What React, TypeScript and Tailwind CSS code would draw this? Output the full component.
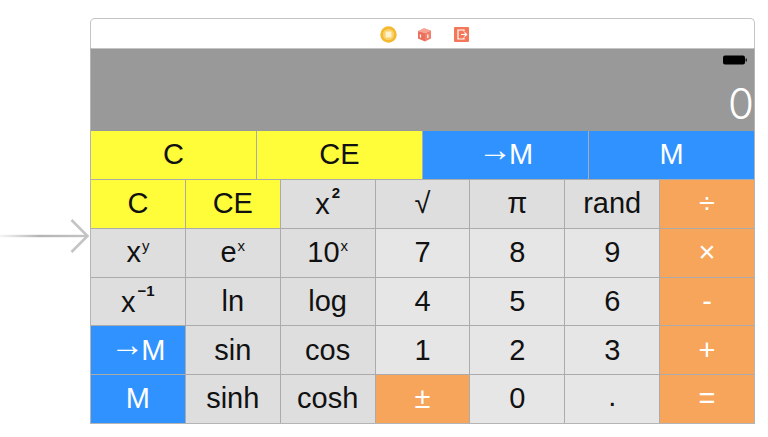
const gray = "bg-[#dedede] text-[#111]";
const light = "bg-[#e6e6e6] text-[#111]";
const yellow = "bg-[#fffd3a] text-[#111]";
const blue = "bg-[#2f92ff] text-white";
const orange = "bg-[#f6a55b] text-white";

function Sup({ base, sup, bold }: { base: string; sup: string; bold?: boolean }) {
  return (
    <span className="flex items-start">
      <span className={bold ? "pt-[2px]" : ""}>{base}</span>
      <span className={bold ? "text-[15px] leading-[23px] font-bold ml-[2px]" : "text-[15px] leading-[30px] ml-[1px]"}>{sup}</span>
    </span>
  );
}

const MemArrow = () => (
  <span className="flex items-center">
    <span className="text-[34px] leading-none tracking-[-3px] -translate-y-[6px]">→</span>
    <span>M</span>
  </span>
);

const topKeys = [
  { label: "C", color: yellow },
  { label: "CE", color: yellow },
  { label: <MemArrow />, color: blue },
  { label: "M", color: blue },
];

const keys: { label: React.ReactNode; color: string }[] = [
  { label: "C", color: yellow },
  { label: "CE", color: yellow },
  { label: <Sup base="x" sup="2" bold />, color: gray },
  { label: "√", color: gray },
  { label: "π", color: gray },
  { label: "rand", color: gray },
  { label: "÷", color: orange },
  { label: <Sup base="x" sup="y" />, color: gray },
  { label: <Sup base="e" sup="x" />, color: gray },
  { label: <Sup base="10" sup="x" />, color: gray },
  { label: "7", color: light },
  { label: "8", color: light },
  { label: "9", color: light },
  { label: "×", color: orange },
  { label: <Sup base="x" sup="−1" bold />, color: gray },
  { label: "ln", color: gray },
  { label: "log", color: gray },
  { label: "4", color: light },
  { label: "5", color: light },
  { label: "6", color: light },
  { label: "-", color: orange },
  { label: <MemArrow />, color: blue },
  { label: "sin", color: gray },
  { label: "cos", color: gray },
  { label: "1", color: light },
  { label: "2", color: light },
  { label: "3", color: light },
  { label: "+", color: orange },
  { label: "M", color: blue },
  { label: "sinh", color: gray },
  { label: "cosh", color: gray },
  { label: "±", color: orange },
  { label: "0", color: light },
  { label: <span className="pb-[4px]">.</span>, color: light },
  { label: "=", color: orange },
];

export default function App() {
  return (
    <div className="relative w-[768px] h-[437px] overflow-hidden bg-white pt-[18px] pl-[90px] font-['Liberation_Sans',Arial,sans-serif]">
      {/* entry point arrow */}
      <svg className="absolute left-0 top-[218px]" width="90" height="36" viewBox="0 0 90 36" fill="none">
        <defs>
          <linearGradient id="tail" x1="0" y1="0" x2="1" y2="0">
            <stop offset="0" stopColor="#bbbbbb" stopOpacity="0.15" />
            <stop offset="0.45" stopColor="#b4b4b4" />
            <stop offset="1" stopColor="#c4c4c4" />
          </linearGradient>
        </defs>
        <rect x="0" y="16.8" width="87" height="2.4" fill="url(#tail)" />
        <path d="M71.5 2 L87.5 18 L71.5 34" stroke="#c4c4c4" strokeWidth="2.6" />
      </svg>

      <div className="w-[665px] flex flex-col">
        {/* scene dock */}
        <div className="h-[30px] bg-white rounded-t-[5px] border border-b-0 border-[#c4c4c4] flex items-center justify-center pt-[1px] pl-[4px]">
          <svg width="17" height="17" viewBox="0 0 17 17">
            <circle cx="8.5" cy="8.5" r="8.2" fill="#f5b82e" />
            <circle cx="8.5" cy="8.5" r="5.6" fill="#f9d36e" />
            <rect x="5.6" y="5.6" width="5.8" height="5.8" fill="#fdf3cf" />
          </svg>
          <svg className="ml-[20px]" width="15" height="15" viewBox="0 0 15 15">
            <path d="M1 4 L7 1 L14 3.5 L8 6 Z" fill="#f7a394" />
            <path d="M1 4 L8 6 L8 14.5 L1 11.5 Z" fill="#ec6f5b" />
            <path d="M8 6 L14 3.5 L14 11.5 L8 14.5 Z" fill="#f0806c" />
            <path d="M3.5 7.5 V10.5 M10.8 7.5 V11" stroke="#fff" strokeWidth="1.2" />
          </svg>
          <svg className="ml-[22px]" width="15" height="15" viewBox="0 0 15 15">
            <rect width="15" height="15" rx="1" fill="#f4775a" />
            <path d="M10 4.5 V3 H4 V12 H10 V10.5" fill="none" stroke="#fff" strokeWidth="1.2" />
            <path d="M7 7.5 H12.5 M10.5 5.5 L12.7 7.5 L10.5 9.5" fill="none" stroke="#fff" strokeWidth="1.1" />
          </svg>
        </div>

        <div className="border border-t-0 border-[#b4b4b4] bg-[#ababab] flex flex-col">
          {/* display */}
          <div className="h-[83px] border-t border-[#c4c4c4] bg-[#999999] flex flex-col items-end">
            <svg className="mt-[6px] mr-[7px]" width="24" height="10" viewBox="0 0 24 10">
              <rect x="0" y="0.5" width="22" height="9" rx="2" fill="#000" />
              <rect x="22.5" y="3.5" width="1.5" height="3" fill="#222" />
            </svg>
            <span className="mt-[16px] text-[42px] leading-[46px] font-light text-white font-['Inter',sans-serif]">0</span>
          </div>

          {/* memory row */}
          <div className="grid grid-cols-4 gap-px h-[48px]">
            {topKeys.map((k, i) => (
              <div key={i} className={`${k.color} flex items-center justify-center text-[29px]`}>
                {k.label}
              </div>
            ))}
          </div>

          {/* keypad */}
          <div className="grid grid-cols-7 grid-rows-5 gap-px mt-px h-[243px]">
            {keys.map((k, i) => (
              <div key={i} className={`${k.color} flex items-center justify-center text-[29px]`}>
                {k.label}
              </div>
            ))}
          </div>
        </div>
      </div>
    </div>
  );
}
